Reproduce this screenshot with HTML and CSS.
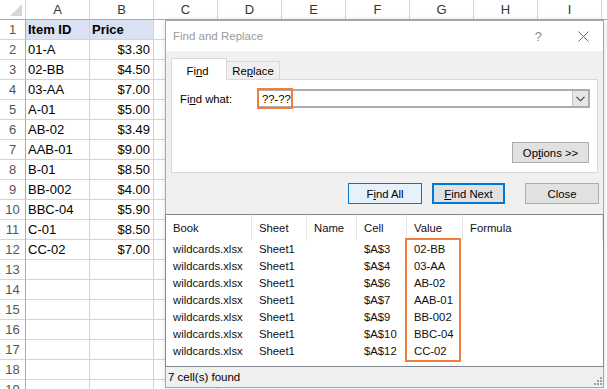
FILE: index.html
```html
<!DOCTYPE html>
<html>
<head>
<meta charset="utf-8">
<title>Find and Replace</title>
<link rel="stylesheet" href="styles.css">
</head>
<body>
<div class="sheet">
  <div class="colhdr">
    <div class="corner"><svg width="26" height="20" viewBox="0 0 26 20"><polygon points="22,4 22,16 10,16" fill="#d6d6d6"/></svg></div>
    <div class="ch">A</div><div class="ch">B</div><div class="ch">C</div><div class="ch">D</div><div class="ch">E</div><div class="ch">F</div><div class="ch">G</div><div class="ch">H</div><div class="ch">I</div><div class="ch last"></div>
  </div>
  <div class="grid">
    <div class="rh">1</div><div class="c hd">Item ID</div><div class="c hd">Price</div><div class="c"></div>
    <div class="rh">2</div><div class="c">01-A</div><div class="c num">$3.30</div><div class="c"></div>
    <div class="rh">3</div><div class="c">02-BB</div><div class="c num">$4.50</div><div class="c"></div>
    <div class="rh">4</div><div class="c">03-AA</div><div class="c num">$7.00</div><div class="c"></div>
    <div class="rh">5</div><div class="c">A-01</div><div class="c num">$5.00</div><div class="c"></div>
    <div class="rh">6</div><div class="c">AB-02</div><div class="c num">$3.49</div><div class="c"></div>
    <div class="rh">7</div><div class="c">AAB-01</div><div class="c num">$9.00</div><div class="c"></div>
    <div class="rh">8</div><div class="c">B-01</div><div class="c num">$8.50</div><div class="c"></div>
    <div class="rh">9</div><div class="c">BB-002</div><div class="c num">$4.00</div><div class="c"></div>
    <div class="rh">10</div><div class="c">BBC-04</div><div class="c num">$5.90</div><div class="c"></div>
    <div class="rh">11</div><div class="c">C-01</div><div class="c num">$8.50</div><div class="c"></div>
    <div class="rh">12</div><div class="c">CC-02</div><div class="c num">$7.00</div><div class="c"></div>
    <div class="rh">13</div><div class="c"></div><div class="c"></div><div class="c"></div>
    <div class="rh">14</div><div class="c"></div><div class="c"></div><div class="c"></div>
    <div class="rh">15</div><div class="c"></div><div class="c"></div><div class="c"></div>
    <div class="rh">16</div><div class="c"></div><div class="c"></div><div class="c"></div>
    <div class="rh">17</div><div class="c"></div><div class="c"></div><div class="c"></div>
    <div class="rh">18</div><div class="c"></div><div class="c"></div><div class="c"></div>
    <div class="rh">19</div><div class="c"></div><div class="c"></div><div class="c"></div>
  </div>
</div>

<div class="dialog">
  <div class="titlebar">
    <span class="title">Find and Replace</span>
    <span class="help">?</span>
    <svg class="xbtn" width="11" height="11" viewBox="0 0 11 11"><path d="M0.5 0.5 L10.5 10.5 M10.5 0.5 L0.5 10.5" stroke="#6a6a6a" stroke-width="1" fill="none"/></svg>
  </div>
  <div class="body">
    <div class="tabs">
      <div class="tab active">Fi<u>n</u>d</div>
      <div class="tab">Re<u>p</u>lace</div>
    </div>
    <div class="panel">
      <div class="findrow">
        <span class="label">Fi<u>n</u>d what:</span>
        <div class="input">
          <span class="val">??-??</span>
          <div class="drop"><svg width="9" height="6" viewBox="0 0 9 6"><path d="M0.5 0.8 L4.5 4.8 L8.5 0.8" stroke="#3c3c3c" stroke-width="1.1" fill="none"/></svg></div>
          <div class="hl-input"></div>
        </div>
      </div>
      <div class="optrow">
        <div class="btn">Op<u>t</u>ions &gt;&gt;</div>
      </div>
    </div>
    <div class="btnrow">
      <div class="btn findall">F<u>i</u>nd All</div>
      <div class="btn findnext"><u>F</u>ind Next</div>
      <div class="btn close">Close</div>
    </div>
    <div class="list">
      <div class="lgrid">
        <div class="lh">Book</div><div class="lh">Sheet</div><div class="lh">Name</div><div class="lh">Cell</div><div class="lh">Value</div><div class="lh">Formula</div>
        <div class="lc">wildcards.xlsx</div><div class="lc">Sheet1</div><div class="lc"></div><div class="lc">$A$3</div><div class="lc">02-BB</div><div class="lc"></div>
        <div class="lc">wildcards.xlsx</div><div class="lc">Sheet1</div><div class="lc"></div><div class="lc">$A$4</div><div class="lc">03-AA</div><div class="lc"></div>
        <div class="lc">wildcards.xlsx</div><div class="lc">Sheet1</div><div class="lc"></div><div class="lc">$A$6</div><div class="lc">AB-02</div><div class="lc"></div>
        <div class="lc">wildcards.xlsx</div><div class="lc">Sheet1</div><div class="lc"></div><div class="lc">$A$7</div><div class="lc">AAB-01</div><div class="lc"></div>
        <div class="lc">wildcards.xlsx</div><div class="lc">Sheet1</div><div class="lc"></div><div class="lc">$A$9</div><div class="lc">BB-002</div><div class="lc"></div>
        <div class="lc">wildcards.xlsx</div><div class="lc">Sheet1</div><div class="lc"></div><div class="lc">$A$10</div><div class="lc">BBC-04</div><div class="lc"></div>
        <div class="lc">wildcards.xlsx</div><div class="lc">Sheet1</div><div class="lc"></div><div class="lc">$A$12</div><div class="lc">CC-02</div><div class="lc"></div>
      </div>
      <div class="hl-values"></div>
    </div>
    <div class="status">
      <span>7 cell(s) found</span>
      <svg class="grip" width="8" height="8" viewBox="0 0 8 8"><g fill="#a0a0a0"><rect x="6" y="0" width="2" height="2"/><rect x="3" y="3" width="2" height="2"/><rect x="6" y="3" width="2" height="2"/><rect x="0" y="6" width="2" height="2"/><rect x="3" y="6" width="2" height="2"/><rect x="6" y="6" width="2" height="2"/></g></svg>
    </div>
  </div>
</div>
</body>
</html>
```

FILE: styles.css
```css
html, body {
  margin: 0;
  padding: 0;
}
body {
  width: 607px;
  height: 389px;
  overflow: hidden;
  position: relative;
  background: #fff;
  font-family: "Liberation Sans", Arial, sans-serif;
}

/* spreadsheet */
.sheet {
  font-size: 13px;
  color: #000;
}
.colhdr {
  display: grid;
  grid-template-columns: 26px repeat(9, 64px) 10px;
  height: 20px;
  border-bottom: 1px solid #ababab;
  box-sizing: border-box;
}
.corner {
  border-right: 1px solid #d4d4d4;
  height: 19px;
  overflow: hidden;
}
.corner svg { display: block; }
.ch {
  border-right: 1px solid #d4d4d4;
  text-align: center;
  line-height: 19px;
  color: #333;
  box-sizing: border-box;
}
.ch.last { border-right: none; }

.grid {
  display: grid;
  grid-template-columns: 26px 64px 64px 64px;
  grid-auto-rows: 20px;
}
.rh, .c {
  box-sizing: border-box;
  border-bottom: 1px solid #d4d4d4;
  line-height: 20px;
  white-space: nowrap;
}
.rh {
  border-right: 1px solid #ababab;
  text-align: center;
  color: #555;
}
.c {
  border-right: 1px solid #d4d4d4;
  padding-left: 2px;
  overflow: hidden;
}
.c.num {
  text-align: right;
  padding-right: 3px;
}
.c.hd {
  background: #d9e1f2;
  font-weight: bold;
}

/* dialog */
.dialog {
  position: absolute;
  left: 165px;
  top: 20px;
  width: 439px;
  height: 368px;
  box-sizing: border-box;
  border: 1px solid #a6a6a6;
  background: #f0f0f0;
  font-size: 11.3px;
  color: #000;
  display: flex;
  flex-direction: column;
  box-shadow: 0 0 6px rgba(0,0,0,0.12);
}
.titlebar {
  height: 30px;
  background: #fff;
  display: flex;
  align-items: center;
  padding: 0 14px 0 7px;
}
.title {
  flex: 1;
  color: #999;
  font-size: 11.5px;
}
.help {
  color: #8a8a8a;
  font-size: 13px;
  margin-right: 36px;
}
.xbtn { display: block; }

.body {
  flex: 1;
  display: flex;
  flex-direction: column;
  padding: 7px 5px 0 5px;
}
.tabs {
  display: flex;
  align-items: flex-end;
  height: 21px;
  position: relative;
  z-index: 2;
}
.tab {
  box-sizing: border-box;
  height: 18px;
  width: 53px;
  border: 1px solid #d9d9d9;
  border-bottom: none;
  border-left: none;
  background: #f0f0f0;
  text-align: center;
  line-height: 19px;
}
.tab.active {
  height: 22px;
  width: 56px;
  margin-bottom: -1px;
  background: #fff;
  border-left: 1px solid #d9d9d9;
  line-height: 24px;
  padding-right: 3px;
}
.panel {
  box-sizing: border-box;
  height: 94px;
  background: #fff;
  border: 1px solid #d9d9d9;
  padding-top: 9px;
}
.findrow {
  display: flex;
  align-items: center;
  height: 19px;
}
.label {
  width: 77px;
  padding-left: 8px;
}
.input {
  position: relative;
  box-sizing: border-box;
  width: 333px;
  height: 19px;
  border: 2px solid #acacac;
  background: #fff;
  display: flex;
  align-items: center;
}
.val {
  flex: 1;
  padding-left: 3px;
}
.drop {
  width: 15px;
  height: 15px;
  background: #e6e6e6;
  border-left: 1px solid #c4c4c4;
  display: flex;
  align-items: center;
  justify-content: center;
}
.drop svg { display: block; }
.hl-input {
  position: absolute;
  left: -2px;
  top: -3px;
  width: 36px;
  height: 21px;
  border: 2px solid #f27d3c;
  box-sizing: border-box;
}
.optrow {
  display: flex;
  justify-content: flex-end;
  padding-right: 8px;
  margin-top: 34px;
}
.btn {
  box-sizing: border-box;
  width: 77px;
  height: 21px;
  background: #e1e1e1;
  border: 1px solid #adadad;
  display: flex;
  align-items: center;
  justify-content: center;
}
.btnrow {
  display: flex;
  justify-content: flex-end;
  margin-top: 10px;
  margin-right: -1px;
}
.btnrow .btn { width: 74px; }
.findall {
  background: #e5f1fb;
  border-color: #0078d7;
}
.findnext {
  border: 2px solid #0078d7;
  margin-left: 10px;
}
.btnrow .findnext { width: 73px; }
.close { margin-left: 20px; }

.list {
  position: relative;
  margin: 10px -6px 0 -6px;
  height: 153px;
  box-sizing: border-box;
  border: 1px solid #828790;
  background: #fff;
}
.lgrid {
  display: grid;
  grid-template-columns: 86px 55px 50px 50px 56px 1fr;
  grid-template-rows: 26px;
  grid-auto-rows: 17px;
}
.lh {
  height: 26px;
  line-height: 26px;
  padding-left: 7px;
  box-sizing: border-box;
  border-right: 1px solid #e5e5e5;
  white-space: nowrap;
}
.lh, .lc { color: #111; }
.lc {
  padding-left: 7px;
  line-height: 17px;
  white-space: nowrap;
}
.hl-values {
  position: absolute;
  left: 239px;
  top: 23px;
  width: 56px;
  height: 124px;
  border: 2px solid #f27d3c;
  box-sizing: border-box;
}
.status {
  margin: 0 -5px;
  height: 20px;
  display: flex;
  align-items: center;
  justify-content: space-between;
  padding: 0 0 0 2px;
  font-size: 11.5px;
}
.grip {
  display: block;
  align-self: flex-end;
  margin: 0 1px 2px 0;
}
```
